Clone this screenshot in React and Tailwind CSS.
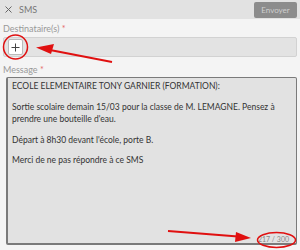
export default function App() {
  return (
    <div className="relative w-[300px] h-[250px] overflow-hidden bg-[#f4f4f4] text-[#555] flex flex-col" style={{ fontFamily: "Lato, 'Open Sans', sans-serif" }}>
      <div className="h-[19px] shrink-0 bg-[#e2e2e2] flex items-center pl-[5px] pr-[3px]">
        <svg width="7" height="7" viewBox="0 0 7 7" className="mr-[7px]">
          <path d="M0.5 0.5L6.5 6.5M6.5 0.5L0.5 6.5" stroke="#666" strokeWidth="1" />
        </svg>
        <span className="text-[9px] text-[#777]">SMS</span>
        <div className="ml-auto h-[16px] w-[43px] rounded-[2px] bg-[#8c8c8c] text-[#cfcfcf] text-[8px] flex items-center justify-center">Envoyer</div>
      </div>
      <div className="flex-1 min-h-0 flex flex-col px-[3px] pt-[5px] pb-[5px]">
        <div className="h-[10px] text-[9px] leading-[10px] text-[#999]">Destinataire(s) <span className="text-[#e46a6a]">*</span></div>
        <div className="mt-[3px] h-[20px] shrink-0 bg-[#e3e3e3] border border-[#d2d2d2] rounded-[2px] flex items-center pl-[4px]">
          <div className="w-[15px] h-[16px] bg-white border border-[#bbb] rounded-[2px] flex items-center justify-center">
            <svg width="9" height="9" viewBox="0 0 9 9">
              <path d="M4.5 0.5V8.5M0.5 4.5H8.5" stroke="#444" strokeWidth="1" />
            </svg>
          </div>
        </div>
        <div className="mt-[8px] h-[10px] text-[9px] leading-[10px] text-[#999]">Message <span className="text-[#e46a6a]">*</span></div>
        <div className="mt-[2px] ml-[3px] flex-1 min-h-0 bg-[#e2e2e2] border border-[#7a7a7a] border-l-2 border-b-2 rounded-[2px] px-[4px] pt-[2px] text-[8.5px] leading-[12px] text-[#333] relative">
          <div>ECOLE ELEMENTAIRE TONY GARNIER (FORMATION):</div>
          <div className="mt-[9px]">Sortie scolaire demain 15/03 pour la classe de M. LEMAGNE. Pensez à</div>
          <div>prendre une bouteille d'eau.</div>
          <div className="mt-[9px]">Départ à 8h30 devant l'école, porte B.</div>
          <div className="mt-[8px]">Merci de ne pas répondre à ce SMS</div>
          <div className="absolute right-[7px] bottom-[0px] text-[7px] leading-[8px] text-[#888]">217 / 300</div>
        </div>
      </div>
      <svg className="absolute inset-0 pointer-events-none" width="300" height="250" viewBox="0 0 300 250">
        <circle cx="15.5" cy="47" r="12" fill="none" stroke="#e01010" strokeWidth="1.5" />
        <path d="M112 62 L50 50" stroke="#e01010" strokeWidth="2" />
        <path d="M36 47.5 L54 44 L51 54 Z" fill="#e01010" />
        <ellipse cx="276.5" cy="240" rx="19" ry="7.5" fill="none" stroke="#e01010" strokeWidth="1.5" />
        <path d="M168 231 L238 236.5" stroke="#e01010" strokeWidth="2" />
        <path d="M251 238 L236 232 L235 242 Z" fill="#e01010" />
      </svg>
    </div>
  );
}
